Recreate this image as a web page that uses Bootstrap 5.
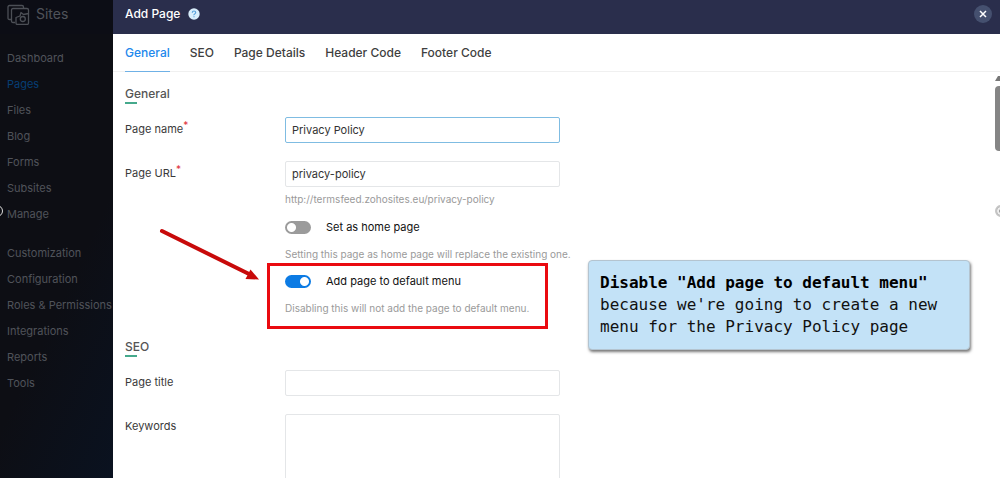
<!DOCTYPE html>
<html lang="en">
<head>
<meta charset="utf-8">
<meta name="viewport" content="width=device-width, initial-scale=1">
<title>Add Page - Sites</title>
<link href="https://cdn.jsdelivr.net/npm/bootstrap@5.3.0/dist/css/bootstrap.min.css" rel="stylesheet">
<style>
body{font-family:Inter,"Liberation Sans",sans-serif;font-size:11px;line-height:16px;color:#3a3a3a;background:#fff}
.side-panel{width:113px;background:linear-gradient(115deg,#0d0e14 60%,#0a1220);color:#50535a}
.brand{height:34px;font-size:14px;padding:0 7px 6px;gap:6px;background:#0c0d15}
.side-panel a{color:inherit;line-height:26px;padding-left:7px;white-space:nowrap;text-decoration:none}
.side-panel a.current{color:#063e74}
.side-list{padding-top:11px}
.side-list .second{margin-top:13px}
.top-bar{height:34px;background:#2a2e4c;color:#fff;font-size:12px;font-weight:500;padding:0 8px 6px 12px}
.help-dot{width:12px;height:12px}
.close-dot{width:18px;height:18px;border:0;border-radius:50%;background:#45506f}
.tab-strip{height:38px;gap:20px;padding-left:12px;border-bottom:1px solid #f0f0f0;font-size:12px;font-weight:500}
.tab-strip a{color:#3f3f3f;text-decoration:none;line-height:38px;height:38px;border-bottom:1px solid transparent}
.tab-strip a.active{color:#2288ec;border-color:#6fb1e6}
.form-area{padding:14px 12px 0}
.sect{font-size:12px;font-weight:500;color:#555;line-height:16px;margin:0;padding-bottom:1px}
.sect::after{content:"";display:block;width:12px;height:2px;background:#45a98c}
.field-row{display:grid;grid-template-columns:160px minmax(0,275px);align-items:start;margin-top:18px}
.field-row>label{line-height:24px}
.sect+.field-row{margin-top:12px}
.req{color:#e0303a;font-size:10px;line-height:1;vertical-align:4px}
.form-control.box{font-size:11px;line-height:16px;height:26px;padding:4px 6px;border:1px solid #e4e6e8;border-radius:2px;color:#333;box-shadow:none}
.form-control.box.on{border-color:#7fbce2}
.form-control.box.tall{height:88px;resize:none}
.hint{font-size:10px;color:#9a9a9a;line-height:16px;white-space:nowrap}
.form-check-input.flip{width:26px;height:13px;margin:0;float:none;border:0;background-color:#9b9b9b;background-image:radial-gradient(circle,#fff 4px,transparent 5px);background-size:13px 13px;background-position:left center;border-radius:7px;box-shadow:none}
.form-check-input.flip:checked{background-color:#0c7be4;background-position:right center;background-image:radial-gradient(circle,#fff 4px,transparent 5px)}
.switch-line{gap:15px;color:#111;height:16px;margin-top:12px}
.switch-line+.hint{margin-top:11px}
.marked{margin-top:11px}
.marked .switch-line{margin-top:0}
.marked::before{content:"";position:absolute;left:-18px;right:12px;top:-10px;bottom:-13px;border:3px solid #ea0a10;pointer-events:none}
.arrow{position:absolute;right:100%;margin-right:25px;bottom:34px;width:104px;height:56px}
.callout{position:absolute;left:calc(100% + 28px);top:-13px;width:382px;padding:11px;background:#c3e2f7;border:1px solid #b4c4d0;border-radius:4px;box-shadow:1px 2px 3px #777;color:#111;font:16px/22px "DejaVu Sans Mono",monospace;white-space:nowrap}
.callout strong{color:#000}
.sect.lower{margin-top:23px}
.bar-rail{position:absolute;right:0;top:75px;width:5px}
.thumb{height:65px;background:#858585;border-radius:4px 0 0 4px}
.grip{position:absolute;top:205px;width:12px;height:12px;border-radius:50%}
.grip.lft{left:-9px;border:1px solid #ddd}
.grip.rgt{right:-7px;border:2px solid #c4c4c4;background:#999;box-shadow:inset 0 0 0 2px #eee}
</style>
</head>
<body>
<div class="d-flex vh-100 overflow-hidden position-relative">
  <aside class="side-panel flex-shrink-0">
    <div class="brand d-flex align-items-center">
      <svg width="23" height="21" viewBox="0 0 23 21" fill="none" stroke="#4c4f56" stroke-width="1.3" stroke-linejoin="round"><path d="M4 15.500H2.500Q1 15.500 1 14V3Q1 1.500 2.500 1.500H15Q16.500 1.500 16.500 3V4.500"/><path d="M8 18.500H6Q4.500 18.500 4.500 17V6Q4.500 4.500 6 4.500H20Q21.500 4.500 21.500 6V19Q21.500 20.500 20 20.500H10.500Q9 20.500 9 19V13.500L13 12L14 8.500L16.500 10.500L21.500 9.500"/><circle cx="15.800" cy="15" r="2.500"/></svg>
      <span>Sites</span>
    </div>
    <nav class="side-list d-flex flex-column" aria-label="Site">
      <a href="#">Dashboard</a><a href="#" class="current">Pages</a><a href="#">Files</a><a href="#">Blog</a><a href="#">Forms</a><a href="#">Subsites</a><a href="#">Manage</a>
      <a href="#" class="second">Customization</a><a href="#">Configuration</a><a href="#">Roles &amp; Permissions</a><a href="#">Integrations</a><a href="#">Reports</a><a href="#">Tools</a>
    </nav>
  </aside>
  <main class="flex-grow-1 overflow-hidden">
    <header class="top-bar d-flex align-items-center">
      <span class="me-2">Add Page</span>
      <svg class="help-dot" viewBox="0 0 12 12" role="img" aria-label="Help"><circle cx="6" cy="6" r="5.700" fill="#d9eefc"/><path d="M4.300 4.700Q4.300 3 6 3T7.700 4.600Q7.700 5.500 6.700 6T6 7.300M6 8.300V9.300" fill="none" stroke="#5ba3dc" stroke-width="1.200"/></svg>
      <button type="button" class="close-dot ms-auto d-flex align-items-center justify-content-center p-0" aria-label="Close"><svg width="8" height="8" viewBox="0 0 8 8" stroke="#fff" stroke-width="1.500"><path d="M1 1L7 7M7 1L1 7"/></svg></button>
    </header>
    <nav class="tab-strip d-flex" aria-label="Page settings">
      <a href="#" class="active">General</a><a href="#">SEO</a><a href="#">Page Details</a><a href="#">Header Code</a><a href="#">Footer Code</a>
    </nav>
    <form class="form-area">
      <h2 class="sect">General</h2>
      <div class="field-row">
        <label for="pname">Page name<span class="req">*</span></label>
        <input id="pname" class="form-control box on" type="text" value="Privacy Policy">
      </div>
      <div class="field-row">
        <label for="purl">Page URL<span class="req">*</span></label>
        <div>
          <input id="purl" class="form-control box" type="text" value="privacy-policy">
          <div class="hint mt-1">http://termsfeed.zohosites.eu/privacy-policy</div>
          <div class="switch-line d-flex align-items-center">
            <input class="form-check-input flip" type="checkbox" role="switch" id="home"><label for="home">Set as home page</label>
          </div>
          <div class="hint">Setting this page as home page will replace the existing one.</div>
          <div class="marked position-relative">
            <div class="switch-line d-flex align-items-center">
              <input class="form-check-input flip" type="checkbox" role="switch" id="menu" checked><label for="menu">Add page to default menu</label>
            </div>
            <div class="hint">Disabling this will not add the page to default menu.</div>
            <svg class="arrow" viewBox="0 0 104 56" aria-hidden="true"><path d="M6 5L93 48" stroke="#c80a0a" stroke-width="4" stroke-linecap="round"/><path d="M103 53.500L89.500 53L94.500 43.500Z" fill="#c80a0a"/></svg>
            <div class="callout"><strong>Disable "Add page to default menu"</strong><br>because we're going to create a new<br>menu for the Privacy Policy page</div>
          </div>
        </div>
      </div>
      <h2 class="sect lower">SEO</h2>
      <div class="field-row">
        <label for="ptitle">Page title</label>
        <input id="ptitle" class="form-control box" type="text">
      </div>
      <div class="field-row">
        <label for="kw">Keywords</label>
        <textarea id="kw" class="form-control box tall"></textarea>
      </div>
    </form>
  </main>
  <div class="bar-rail" aria-hidden="true"><svg class="d-block mb-1" width="5" height="7" viewBox="0 0 5 7"><path d="M0 6L3 1H5V6Z" fill="#777"/></svg><div class="thumb"></div></div>
  <span class="grip lft"></span><span class="grip rgt"></span>
</div>
<script src="https://cdn.jsdelivr.net/npm/bootstrap@5.3.0/dist/js/bootstrap.bundle.min.js"></script>
</body>
</html>
